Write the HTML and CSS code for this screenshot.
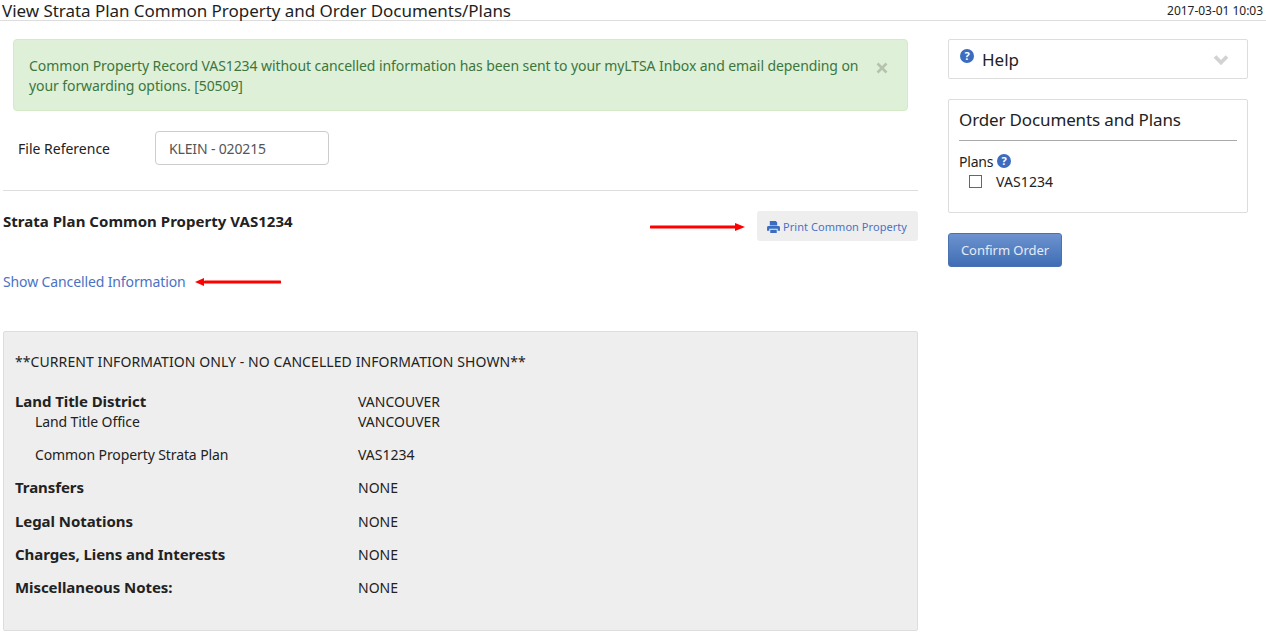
FILE: index.html
```html
<!DOCTYPE html>
<html lang="en">
<head>
<meta charset="utf-8">
<title>View Strata Plan Common Property</title>
<link rel="stylesheet" href="styles.css">
</head>
<body>
<header class="topbar">
  <h1 class="page-title">View Strata Plan Common Property and Order Documents/Plans</h1>
  <span class="timestamp">2017-03-01 10:03</span>
</header>
<div class="columns">
  <main class="main">
    <div class="alert">
      <p class="alert-text">Common Property Record VAS1234 without cancelled information has been sent to your myLTSA Inbox and email depending on your forwarding options. [50509]</p>
      <svg class="alert-close" viewBox="0 0 12 12" width="12" height="12"><path d="M1.5 1.5l9 9M10.5 1.5l-9 9" stroke="#b4c2ae" stroke-width="2.6" fill="none"/></svg>
    </div>
    <div class="file-ref">
      <label class="file-label" for="ref">File Reference</label>
      <input class="file-input" id="ref" type="text" value="KLEIN - 020215">
    </div>
    <hr class="divider">
    <div class="section-head">
      <h2 class="section-title">Strata Plan Common Property VAS1234</h2>
      <a class="print-btn" href="#">
        <svg class="print-icon" viewBox="0 0 14 13" width="13" height="12"><path fill="#3b6cc0" d="M3 0h6.5L11 1.5V5H3zM1.5 5.5h11A1.5 1.5 0 0 1 14 7v3.500h-2.500V8.500h-9v2H0V7a1.500 1.500 0 0 1 1.500-1.500zM3.500 9.500h7V13h-7z"/></svg>
        Print Common Property
      </a>
      <svg class="arrow arrow-print" viewBox="0 0 95 8" width="95" height="8"><path d="M1 4h85" stroke="#f00" stroke-width="3" stroke-linecap="round"/><path d="M85 0l10 4-10 4z" fill="#f00"/></svg>
    </div>
    <div class="show-row">
      <a class="show-link" href="#">Show Cancelled Information</a>
      <svg class="arrow arrow-show" viewBox="0 0 86 8" width="86" height="8"><path d="M10 4h75" stroke="#f00" stroke-width="3" stroke-linecap="round"/><path d="M9 0L0 4l9 4z" fill="#f00"/></svg>
    </div>
    <section class="record">
      <p class="record-note">**CURRENT INFORMATION ONLY - NO CANCELLED INFORMATION SHOWN**</p>
      <dl class="record-list">
        <div class="rec-row tight"><dt class="rec-key strong">Land Title District</dt><dd class="rec-val">VANCOUVER</dd></div>
        <div class="rec-row"><dt class="rec-key sub">Land Title Office</dt><dd class="rec-val">VANCOUVER</dd></div>
        <div class="rec-row"><dt class="rec-key sub">Common Property Strata Plan</dt><dd class="rec-val">VAS1234</dd></div>
        <div class="rec-row wide"><dt class="rec-key strong">Transfers</dt><dd class="rec-val">NONE</dd></div>
        <div class="rec-row"><dt class="rec-key strong">Legal Notations</dt><dd class="rec-val">NONE</dd></div>
        <div class="rec-row"><dt class="rec-key strong">Charges, Liens and Interests</dt><dd class="rec-val">NONE</dd></div>
        <div class="rec-row"><dt class="rec-key strong">Miscellaneous Notes:</dt><dd class="rec-val">NONE</dd></div>
      </dl>
    </section>
  </main>
  <aside class="side">
    <div class="panel help">
      <svg class="q-icon q-help" viewBox="0 0 14 14" width="14" height="14"><circle cx="7" cy="7" r="7" fill="#3b6cc0"/><text x="7" y="11" text-anchor="middle" class="q-mark">?</text></svg>
      <span class="help-title">Help</span>
      <svg class="chev" viewBox="0 0 16 11" width="16" height="11"><path d="M2 2.500l6 6 6-6" fill="none" stroke="#d2d2d2" stroke-width="3.800"/></svg>
    </div>
    <div class="panel order">
      <h3 class="order-title">Order Documents and Plans</h3>
      <div class="plans-label"><span class="plans-text">Plans</span>
        <svg class="q-icon" viewBox="0 0 14 14" width="14" height="14"><circle cx="7" cy="7" r="7" fill="#3b6cc0"/><text x="7" y="11" text-anchor="middle" class="q-mark">?</text></svg>
      </div>
      <label class="plan-item"><span class="check"></span><span class="plan-name">VAS1234</span></label>
    </div>
    <button class="confirm" type="button">Confirm Order</button>
  </aside>
</div>
</body>
</html>
```
FILE: styles.css
```css
* { box-sizing: border-box; }
html, body { margin: 0; padding: 0; }
body {
  background: #fff;
  color: #222;
  font-family: "Noto Sans", "Open Sans", "DejaVu Sans", sans-serif;
  font-size: 14px;
  line-height: 20px;
  height: 636px;
  overflow: hidden;
}
.topbar {
  display: flex;
  justify-content: space-between;
  height: 21px;
  padding: 0 3px 0 2px;
  border-bottom: 1px solid #ddd;
}
.page-title { margin: 0; font-size: 17px; font-weight: 400; line-height: 21px; letter-spacing: -.04px; color: #1e1e1e; }
.timestamp { font-size: 12px; line-height: 22px; letter-spacing: -.03px; color: #222; }
.columns { display: flex; padding-left: 3px; }
.main { width: 915px; flex: none; }
.alert {
  display: flex;
  justify-content: space-between;
  margin: 18px 0 0 10px;
  width: 895px;
  height: 72px;
  padding: 16px 19px 0 15px;
  background: #dff0d8;
  border: 1px solid #d6e9c6;
  border-radius: 4px;
  color: #3c763d;
}
.alert-text { margin: 0; width: 835px; letter-spacing: -.08px; }
.alert-close { margin-top: 6px; flex: none; }
.file-ref { display: flex; align-items: center; margin: 20px 0 0 15px; height: 34px; }
.file-label { width: 137px; padding-top: 1px; color: #222; }
.file-input {
  width: 174px;
  height: 34px;
  padding: 0 13px;
  border: 1px solid #ccc;
  border-radius: 4px;
  color: #555;
  font: inherit;
  letter-spacing: -.15px;
}
.divider { margin: 25px 0 0; border: 0; border-top: 1px solid #ddd; }
.section-head { position: relative; display: flex; justify-content: space-between; margin-top: 20px; height: 30px; }
.section-title { margin: 0; font-size: 15px; font-weight: 700; line-height: 20px; letter-spacing: .03px; color: #222; }
.print-btn {
  display: flex;
  align-items: center;
  gap: 3px;
  height: 30px;
  padding: 1px 11px 0 10px;
  background: #eee;
  border-radius: 3px;
  color: #4a72c4;
  font-size: 11px;
  letter-spacing: .05px;
  text-decoration: none;
}
.print-icon { flex: none; }
.arrow { position: absolute; }
.arrow-print { left: 647px; top: 12px; }
.show-row { position: relative; margin-top: 31px; }
.show-link { color: #4a72c4; letter-spacing: -.12px; text-decoration: none; }
.arrow-show { left: 192px; top: 6px; }
.record {
  margin-top: 39px;
  height: 300px;
  padding: 20px 11px 0;
  background: #eee;
  border: 1px solid #ddd;
  border-radius: 2px;
}
.record-note { margin: 0 0 20px; letter-spacing: .08px; color: #222; }
.record-list { margin: 0; }
.rec-row { display: grid; grid-template-columns: 343px 1fr; margin-bottom: 13px; }
.rec-row.tight { margin-bottom: 0; }
.rec-row.wide { margin-bottom: 14px; }
.rec-key { margin: 0; letter-spacing: -.1px; }
.rec-key.strong { margin-top: -1px; font-size: 15px; font-weight: 700; letter-spacing: -.07px; }
.rec-key.sub { padding-left: 20px; }
.rec-val { margin: 0; }
.side { width: 300px; margin-left: 30px; flex: none; }
.panel { background: #fff; border: 1px solid #ddd; border-radius: 2px; }
.help { display: flex; align-items: center; height: 40px; margin-top: 18px; padding: 0 18px 0 11px; }
.q-icon { flex: none; vertical-align: -1px; }
.q-help { margin-top: -6px; }
.q-mark { font-size: 11px; font-weight: 700; fill: #fff; }
.help-title { margin: 2px 0 0 8px; font-size: 17px; color: #222; }
.chev { margin-left: auto; }
.order { height: 114px; margin-top: 20px; padding: 9px 10px 0; }
.order-title { margin: 0; padding-bottom: 9px; border-bottom: 1px solid #aaa; font-size: 17px; font-weight: 400; line-height: 22px; letter-spacing: -.14px; color: #222; }
.plans-label { margin-top: 11px; }
.plans-text { letter-spacing: -.2px; }
.plan-item { display: flex; align-items: center; padding-left: 10px; }
.check { width: 13px; height: 13px; margin: 0 14px 2px 0; background: #fff; border: 1px solid #666; }
.plan-name { letter-spacing: .1px; }
.confirm {
  display: block;
  width: 114px;
  height: 34px;
  margin-top: 20px;
  padding: 0;
  background: linear-gradient(#6d93cf, #3f6db5);
  border: 1px solid #4a72b0;
  border-radius: 3px;
  color: #e4ecf7;
  font: inherit;
  font-size: 13px;
  letter-spacing: -.05px;
}
```
